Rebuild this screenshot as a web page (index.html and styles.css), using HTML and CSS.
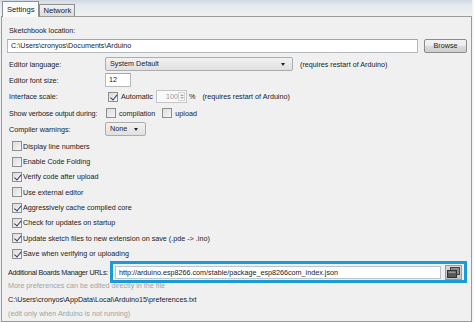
FILE: index.html
```html
<!DOCTYPE html>
<html lang="en">
<head>
    <meta charset="UTF-8">
    <title>Preferences</title>
    <link rel="stylesheet" href="styles.css">
</head>
<body>
    <div class="window">
        <div class="tabs">
            <div class="tab active">Settings</div>
            <div class="tab">Network</div>
        </div>

        <div class="panel">
            <div class="caption">Sketchbook location:</div>
            <div class="path-row">
                <div class="field path">C:\Users\cronyos\Documents\Arduino</div>
                <div class="button">Browse</div>
            </div>

            <div class="form-grid">
                <div class="label">Editor language:</div>
                <div class="controls">
                    <div class="select language">System Default<span class="arrow"></span></div>
                    <span>(requires restart of Arduino)</span>
                </div>

                <div class="label">Editor font size:</div>
                <div class="controls">
                    <div class="field size">12</div>
                </div>

                <div class="label">Interface scale:</div>
                <div class="controls">
                    <span class="check on"></span>
                    <span class="after-check">Automatic</span>
                    <div class="spinner">100<span class="spin-arrows"><i class="up"></i><i class="down"></i></span></div>
                    <span class="percent">%</span>
                    <span>(requires restart of Arduino)</span>
                </div>

                <div class="label tight">Show verbose output during:</div>
                <div class="controls verbose">
                    <span class="check"></span>
                    <span class="after-check">compilation</span>
                    <span class="check"></span>
                    <span>upload</span>
                </div>

                <div class="label">Compiler warnings:</div>
                <div class="controls">
                    <div class="select warnings">None<span class="arrow"></span></div>
                </div>
            </div>

            <ul class="checks">
                <li><span class="check"></span>Display line numbers</li>
                <li><span class="check"></span>Enable Code Folding</li>
                <li><span class="check on"></span>Verify code after upload</li>
                <li><span class="check"></span>Use external editor</li>
                <li><span class="check on"></span>Aggressively cache compiled core</li>
                <li><span class="check on"></span>Check for updates on startup</li>
                <li><span class="check on"></span>Update sketch files to new extension on save (.pde -&gt; .ino)</li>
                <li><span class="check on"></span>Save when verifying or uploading</li>
            </ul>

            <div class="urls-row">
                <span class="urls-label">Additional Boards Manager URLs:</span>
                <div class="highlight">
                    <div class="field url">http://arduino.esp8266.com/stable/package_esp8266com_index.json</div>
                    <div class="icon-btn">
                        <svg width="13" height="11" viewBox="0 0 13 11">
                            <rect x="3.5" y="0.5" width="9" height="7" fill="#8a8a8a" stroke="#444"/>
                            <rect x="0.5" y="3.5" width="9" height="7" fill="#5a5a5a" stroke="#333"/>
                            <rect x="1.5" y="4.5" width="7" height="1.5" fill="#9a9a9a"/>
                        </svg>
                    </div>
                </div>
            </div>

            <div class="notes">
                <div class="muted">More preferences can be edited directly in the file</div>
                <div>C:\Users\cronyos\AppData\Local\Arduino15\preferences.txt</div>
                <div class="muted">(edit only when Arduino is not running)</div>
            </div>
        </div>
    </div>
</body>
</html>
```

FILE: styles.css
```css
* {
    margin: 0;
    padding: 0;
    box-sizing: border-box;
}

body {
    width: 474px;
    height: 322px;
    overflow: hidden;
    background: #f6f6f6;
    font-family: 'Liberation Sans', Arial, sans-serif;
    font-size: 7.2px;
    color: #222;
}

.window {
    width: 472px;
    background: linear-gradient(#cfd8e2 0px, #e4e9ee 5px, #eef0f2 14px);
}

/* Tabs */
.tabs {
    display: flex;
    align-items: flex-end;
    height: 16px;
    padding-left: 2px;
}

.tab {
    height: 12px;
    padding: 0 3px;
    border: 1px solid #8e8f8f;
    border-bottom: none;
    background: linear-gradient(#f2f2f2, #dcdcdc);
    line-height: 11px;
    font-size: 7.6px;
}

.tab.active {
    height: 16px;
    padding: 0 4px;
    background: #fafafa;
    line-height: 15px;
    margin-bottom: -1px;
    position: relative;
    z-index: 1;
}

/* Panel */
.panel {
    height: 306px;
    margin-left: 1px;
    border: 1px solid #9a9a9a;
    background: #f0f0f0;
    padding: 7px 4px 0 5px;
}

.caption {
    height: 13px;
    line-height: 13px;
    padding-left: 2px;
}

.path-row {
    display: flex;
    align-items: center;
    gap: 6px;
    margin-top: 2px;
}

.field {
    height: 14px;
    background: #fff;
    border: 1px solid #b5b8bd;
    border-top-color: #a3a6ab;
    line-height: 12px;
    padding: 0 3px;
    white-space: nowrap;
    overflow: hidden;
}

.path {
    width: 411px;
}

.button {
    width: 43px;
    height: 14px;
    border: 1px solid #8b8b8b;
    border-radius: 2px;
    background: linear-gradient(#f3f3f3 0%, #ebebeb 50%, #dadada 51%, #cfcfcf 100%);
    text-align: center;
    line-height: 12px;
}

/* Label / control rows */
.form-grid {
    display: grid;
    grid-template-columns: 98px 1fr;
    grid-auto-rows: 16.3px;
    margin-top: 3px;
}

.label {
    display: flex;
    align-items: center;
    padding-left: 2px;
    white-space: nowrap;
}

.label.tight {
    letter-spacing: -0.12px;
}

.controls {
    display: flex;
    align-items: center;
}

.select {
    position: relative;
    height: 14px;
    border: 1px solid #acacac;
    border-radius: 2px;
    background: linear-gradient(#f2f2f2, #e0e0e0);
    line-height: 12px;
    padding-left: 4px;
}

.select .arrow {
    position: absolute;
    right: 7px;
    top: 5px;
    border-left: 2.5px solid transparent;
    border-right: 2.5px solid transparent;
    border-top: 3px solid #222;
}

.language {
    width: 188px;
    margin-right: 7px;
}

.warnings {
    width: 41px;
}

.size {
    width: 26px;
    padding-left: 3px;
}

.check {
    display: inline-block;
    position: relative;
    width: 10px;
    height: 10px;
    border: 1px solid #8f8f8f;
    background: linear-gradient(135deg, #dcdcdc, #f6f6f6);
    flex: none;
}

.check.on::after {
    content: "";
    position: absolute;
    left: 3px;
    top: 0px;
    width: 2.5px;
    height: 5.5px;
    border-right: 1.3px solid #2f3f6a;
    border-bottom: 1.3px solid #2f3f6a;
    transform: rotate(40deg);
}

.controls .check {
    margin-left: 3px;
    margin-right: 3px;
}

.after-check {
    margin-right: 3px;
}

.spinner {
    position: relative;
    width: 31px;
    height: 13px;
    border: 1px solid #c6c6c6;
    background: #f9f9f9;
    color: #9a9a9a;
    line-height: 11px;
    padding-left: 9px;
}

.spin-arrows {
    position: absolute;
    right: 1px;
    top: 1px;
    width: 7px;
    height: 9px;
    border: 1px solid #d2d2d2;
}

.spin-arrows i {
    position: absolute;
    left: 1px;
    border-left: 2px solid transparent;
    border-right: 2px solid transparent;
}

.spin-arrows .up {
    top: 1px;
    border-bottom: 2px solid #a8a8a8;
}

.spin-arrows .down {
    bottom: 1px;
    border-top: 2px solid #a8a8a8;
}

.percent {
    margin: 0 7px 0 2px;
}

.verbose .check:first-child {
    margin-left: 1px;
}

.verbose .after-check {
    margin-right: 4px;
}

/* Checkbox list */
.checks {
    list-style: none;
    margin-top: 1px;
    padding-left: 5px;
}

.checks li {
    display: flex;
    align-items: center;
    height: 15.35px;
}

.checks .check {
    margin-right: 1px;
}

/* Boards manager URLs */
.urls-row {
    display: flex;
    align-items: center;
    padding-left: 1px;
}

.urls-label {
    width: 106px;
    white-space: nowrap;
    letter-spacing: -0.28px;
}

.highlight {
    display: flex;
    align-items: center;
    gap: 4px;
    width: 357px;
    height: 22px;
    border: 3px solid #1b9ad8;
    padding: 0 2px 0 2px;
}

.url {
    width: 328px;
    height: 13px;
    line-height: 11px;
    border-color: #b9c5d0;
}

.icon-btn {
    display: flex;
    align-items: center;
    justify-content: center;
    width: 17px;
    height: 15px;
    background: linear-gradient(#d9d9d9, #c2c2c2);
    border: 1px solid #9c9c9c;
}

/* Footer notes */
.notes {
    margin-top: -4px;
    padding-left: 1px;
}

.notes div {
    height: 14px;
    line-height: 14px;
}

.muted {
    color: #a3a3a3;
}
```
